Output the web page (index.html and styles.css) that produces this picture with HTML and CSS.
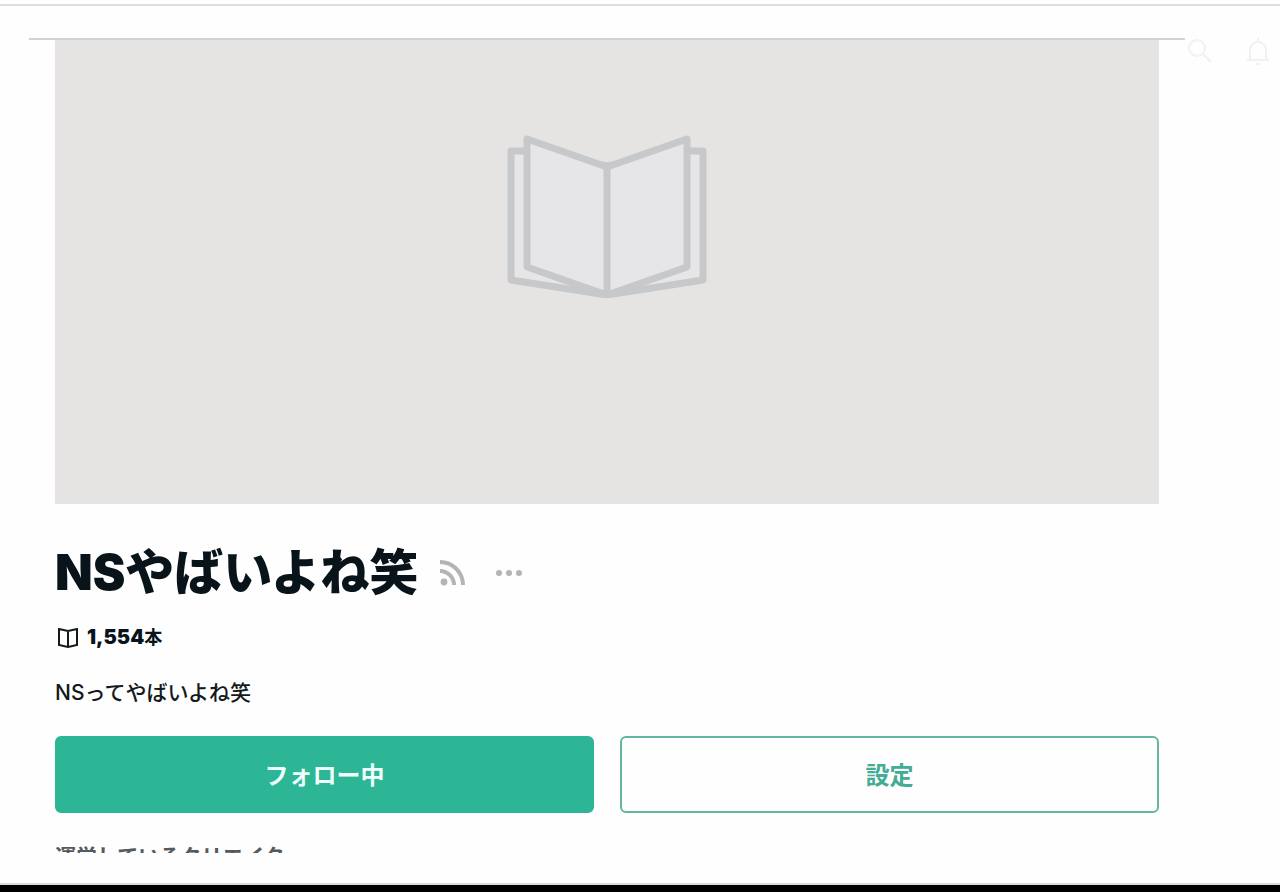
FILE: index.html
```
<!DOCTYPE html>
<html lang="ja">

<head>
    <meta charset="UTF-8">
    <meta name="viewport" content="width=device-width, initial-scale=1.0">
    <title>NSやばいよね笑</title>
    <link rel="stylesheet" href="styles.css">
</head>

<body>
    <div class="topbar"></div>
    <div class="page">
        <main class="magazine">
            <div class="cover">
                <svg class="cover_icon" viewBox="0 0 200 164" fill="#e6e5e7" stroke="#c7c8c9" stroke-width="7" stroke-linejoin="round">
                    <path d="M20 17H4v129l96 15V32z"/>
                    <path d="M180 17h16v129l-96 15V32z"/>
                    <path d="M20 5l80 28 80-28v128l-80 28-80-28z"/>
                    <path d="M100 33v127"/>
                </svg>
            </div>
            <div class="title">
                <h1>NSやばいよね笑</h1>
                <a class="rss" href="#" aria-label="RSS">
                    <svg width="26" height="26" viewBox="0 0 26 26" fill="none" stroke="#b3b5b5" stroke-width="4">
                        <circle cx="4" cy="22" r="3.4" fill="#b3b5b5" stroke="none"/>
                        <path d="M0 11a14 14 0 0 1 14 14M0 2a23 23 0 0 1 23 23"/>
                    </svg>
                </a>
                <button class="more" aria-label="その他">
                    <svg width="26" height="8" viewBox="0 0 26 8" fill="#b3b5b5">
                        <circle cx="3" cy="4" r="3"/>
                        <circle cx="13" cy="4" r="3"/>
                        <circle cx="23" cy="4" r="3"/>
                    </svg>
                </button>
            </div>
            <div class="count">
                <svg width="20" height="20" viewBox="0 0 20 20" fill="none" stroke="#14191b" stroke-width="2">
                    <path d="M1 1l9 2 9-2v16l-9 2-9-2zM10 3v16"/>
                </svg>
                <span>1,554<small>本</small></span>
            </div>
            <p class="description">NSってやばいよね笑</p>
            <div class="actions">
                <button class="btn follow">フォロー中</button>
                <button class="btn setting">設定</button>
            </div>
            <h2 class="creators">運営しているクリエイター</h2>
        </main>
        <div class="tools">
            <button aria-label="検索">
                <svg width="26" height="26" viewBox="0 0 26 26" fill="none" stroke="#f1f1f1" stroke-width="2">
                    <circle cx="10" cy="10" r="8"/>
                    <path d="M16 16l8 8"/>
                </svg>
            </button>
            <button aria-label="通知">
                <svg width="22" height="28" viewBox="0 0 22 28" fill="none" stroke="#f1f1f1" stroke-width="2">
                    <path d="M0 22h22M3 22V12a8 8 0 0 1 16 0v10M11 0v4M9 26h4"/>
                </svg>
            </button>
        </div>
    </div>
    <footer class="bottom"></footer>
</body>

</html>
```
FILE: styles.css
```
* {
    box-sizing: border-box;
}

body {
    display: flex;
    flex-direction: column;
    min-height: 100vh;
    margin: 0;
    background: #fefefe;
    color: #08131a;
    font-family: Inter, "Noto Sans CJK JP", sans-serif;
}

h1,
h2,
p {
    margin: 0;
}

button {
    padding: 0;
    border: 0;
    background: none;
    font-family: inherit;
    cursor: pointer;
}

svg {
    display: block;
}

.topbar {
    height: 38px;
    padding-top: 4px;
}

.topbar::before {
    content: "";
    display: block;
    height: 2px;
    background: #dedede;
}

.page {
    display: flex;
    flex: 1;
    padding-left: 29px;
}

.magazine {
    flex: 1;
    padding: 0 26px;
    border-top: 2px solid #d2d3d3;
}

.cover {
    display: flex;
    justify-content: center;
    aspect-ratio: 1104 / 464;
    padding-top: 94px;
    background: #e5e4e3;
}

.cover_icon {
    width: 200px;
    height: 164px;
}

.title {
    display: flex;
    align-items: center;
    margin-top: 33px;
}

.title h1 {
    font-size: 49px;
    line-height: 72px;
    font-weight: 900;
}

.rss {
    margin-left: 22px;
}

.more {
    margin-left: 30px;
}

.count {
    display: flex;
    align-items: center;
    gap: 9px;
    margin-top: 14px;
    padding-left: 3px;
    font-size: 20px;
    line-height: 28px;
    font-weight: 900;
}

.count small {
    font-size: 18px;
    font-weight: 700;
}

.description {
    margin-top: 24px;
    color: #14191b;
    font-size: 21px;
    line-height: 34px;
    font-weight: 500;
}

.actions {
    display: grid;
    grid-template-columns: 1fr 1fr;
    gap: 26px;
    margin-top: 26px;
}

.btn {
    height: 77px;
    padding-bottom: 2px;
    border: 2px solid #2cb696;
    border-radius: 6px;
    font-size: 24px;
    font-weight: 700;
}

.follow {
    background: #2cb696;
    color: #effffb;
}

.setting {
    border-color: #64b5a2;
    color: #43ac94;
}

/* 見出しは下半分が隠れる */
.creators {
    height: 16px;
    margin-top: 24px;
    padding-top: 4px;
    overflow: hidden;
    color: #55595b;
    font-size: 21px;
    line-height: 32px;
    font-weight: 700;
}

.tools {
    display: flex;
    align-items: flex-start;
    gap: 34px;
    width: 95px;
    padding-left: 2px;
}

.bottom {
    height: 9px;
    border-top: 2px solid #d9dcdb;
    background: #000;
}
```
